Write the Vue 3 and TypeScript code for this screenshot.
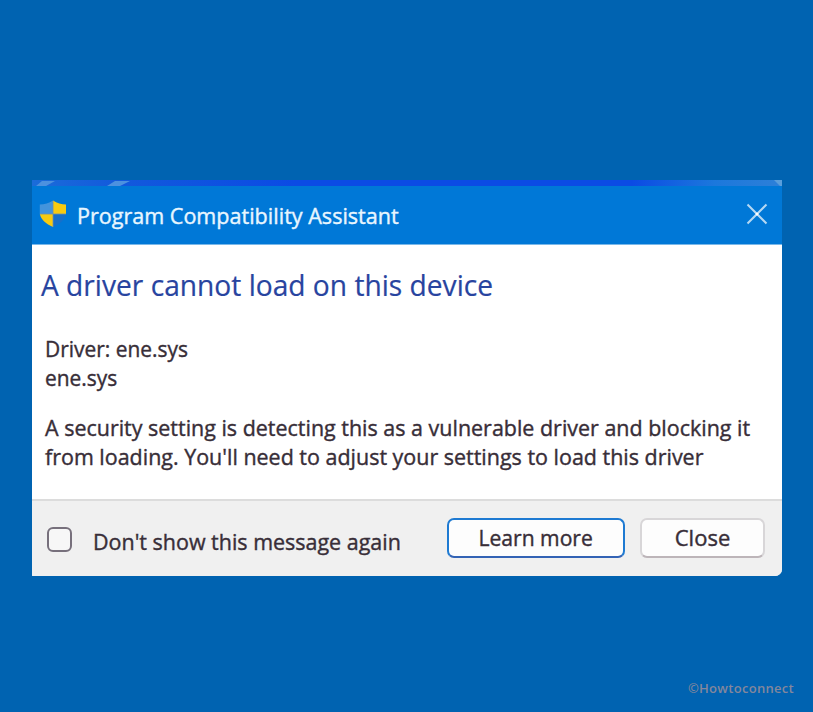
<script setup lang="ts">
interface DialogAction {
  label: string
  kind: 'primary' | 'secondary'
}

const title: string = 'Program Compatibility Assistant'
const heading: string = 'A driver cannot load on this device'
const driverLines: string[] = ['Driver: ene.sys', 'ene.sys']
const message: string[] = [
  'A security setting is detecting this as a vulnerable driver and blocking it',
  "from loading. You'll need to adjust your settings to load this driver",
]
const actions: DialogAction[] = [
  { label: 'Learn more', kind: 'primary' },
  { label: 'Close', kind: 'secondary' },
]
</script>

<template>
  <main class="desktop">
    <section class="dialog">
      <div class="edge">
        <svg width="750" height="6" viewBox="0 0 750 6">
          <path d="M4 6L10 1H23L14 6ZM75 6L83 1H98L88 6Z" fill="#4c91df" />
          <path d="M742 0H750V6H748Z" fill="#5a9edb" />
        </svg>
      </div>
      <header class="titlebar">
        <svg class="shield" width="28" height="28" viewBox="0 0 28 28">
          <path d="M14 0.5C10 3.3 5.5 4.6 0.8 4.6V14H14Z" fill="#4394dc" />
          <path d="M14 0.5C18 3.3 22.5 4.6 27 4.6V14H14Z" fill="#f8cb10" />
          <path d="M0.8 14H14V27C7 24 2 19.500 0.8 14Z" fill="#f8cb10" />
          <path d="M27 14H14V27C21 24 26 19.500 27 14Z" fill="#176fca" />
          <path d="M14 1V27M1 14H27" stroke="#6f91a8" stroke-width="0.8" />
        </svg>
        <h1 class="title"><span class="fit">{{ title }}</span></h1>
        <svg class="close" width="22" height="22" viewBox="0 0 22 22">
          <path d="M1.500 1.500L20.500 20.500M20.500 1.500L1.500 20.500" stroke="#b5d8f3" stroke-width="2" />
          <circle cx="11" cy="11" r="1.500" fill="#fff" />
        </svg>
      </header>
      <div class="content">
        <h2 class="heading"><span class="fit">{{ heading }}</span></h2>
        <div class="driver">
          <div v-for="line in driverLines" :key="line"><span class="fit">{{ line }}</span></div>
        </div>
        <div class="message">
          <div v-for="line in message" :key="line"><span class="fit">{{ line }}</span></div>
        </div>
      </div>
      <footer class="footer">
        <span class="checkbox"></span>
        <div class="option"><span class="fit">Don't show this message again</span></div>
        <button v-for="action in actions" :key="action.label" type="button" :class="['button', action.kind]">
          <span class="label">{{ action.label }}</span>
        </button>
      </footer>
    </section>
    <div class="credit">©Howtoconnect</div>
  </main>
</template>

<style>
body {
  background: #0063b1;
}
</style>

<style scoped>
.desktop {
  box-sizing: border-box;
  display: flex;
  flex-direction: column;
  width: 813px;
  height: 712px;
  padding: 180px 31px 0 32px;
  background: #0063b1;
  font-family: "Open Sans", "Noto Sans", sans-serif;
  white-space: nowrap;
}
.dialog {
  width: 750px;
  height: 396px;
  border-radius: 0 0 7px 1px;
  overflow: hidden;
  background: #fff;
}
.fit {
  display: inline-block;
  transform: scaleX(0.954);
  transform-origin: 0 50%;
  -webkit-text-stroke: 0.4px currentColor;
}
.edge {
  height: 6px;
  background: linear-gradient(90deg, #1b6cd9 0, #1259dc 12%, #0b4be4 35%, #0b4be4 80%, #1c78dc 91%, #2d80d8 100%);
}
.edge svg {
  display: block;
}
.titlebar {
  box-sizing: border-box;
  display: flex;
  height: 59px;
  border-bottom: 1px solid #79b8e9;
  background: #0078d7;
  color: #e8f6ff;
}
.shield {
  margin: 14px 0 0 7px;
}
.title {
  flex: 1;
  margin: 14px 0 0 10px;
  font-size: 22px;
  line-height: 30px;
  font-weight: 400;
}
.title .fit {
  transform: scaleX(0.98);
}
.close {
  margin: 17px 14px 0 0;
}
.content {
  box-sizing: border-box;
  height: 256px;
  padding: 20px 0 0 13px;
  border-bottom: 2px solid #dcdcdc;
  color: #382e38;
  font-size: 22.5px;
  line-height: 29px;
}
.heading {
  margin: 0 0 0 -4px;
  color: #28449f;
  font-size: 29px;
  line-height: 40px;
  font-weight: 400;
}
.heading .fit {
  transform: scaleX(0.971);
  -webkit-text-stroke-width: 0.2px;
}
.driver {
  margin-top: 29px;
}
.driver .fit {
  transform: scaleX(0.93);
}
.message {
  margin-top: 21px;
}
.footer {
  box-sizing: border-box;
  display: flex;
  height: 75px;
  padding: 0 17px 0 15px;
  background: #f0f0f0;
  color: #382e38;
}
.checkbox {
  box-sizing: border-box;
  width: 25px;
  height: 25px;
  margin-top: 26px;
  border: 2px solid #77707c;
  border-radius: 6px;
  background: #f7f7f7;
}
.option {
  flex: 1;
  width: 0;
  margin: 25px 0 0 21px;
  font-size: 22.5px;
  line-height: 32px;
}
.button {
  box-sizing: border-box;
  height: 40px;
  margin: 17px 0 0;
  padding: 0 0 2px;
  border-radius: 7px;
  background: #fdfdfd;
  color: #382e38;
  font: 400 22px/34px "Open Sans", "Noto Sans", sans-serif;
  text-align: center;
}
.label {
  display: inline-block;
  transform: scaleX(0.96);
  -webkit-text-stroke: 0.4px currentColor;
}
.primary {
  width: 178px;
  border: 2px solid #1e7ad2;
  border-bottom-color: #3363b5;
}
.secondary {
  width: 125px;
  margin-left: 15px;
  border: 2px solid #d8d6d8;
  border-bottom-color: #bdb5b9;
}
.secondary .label {
  transform: none;
}
.credit {
  align-self: flex-end;
  margin: 102px -12px 0 0;
  color: #83879c;
  font-size: 13px;
  line-height: 20px;
  font-weight: 600;
  letter-spacing: 0.3px;
}
</style>
